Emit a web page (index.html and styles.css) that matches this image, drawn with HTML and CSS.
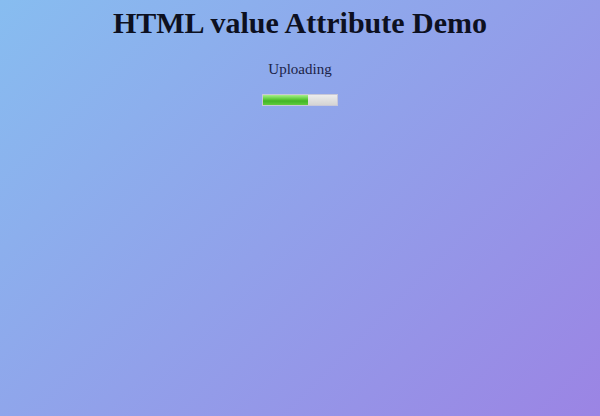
FILE: index.html
```html
<!DOCTYPE html>
<html>
<head>
<meta charset="utf-8">
<link rel="stylesheet" href="styles.css">
</head>
<body>
<h1 class="title">HTML value Attribute Demo</h1>
<p class="label">Uploading</p>
<div class="bar"><div class="fill" style="width:61%"></div></div>
</body>
</html>
```
FILE: styles.css
```css
html, body { margin: 0; height: 100%; }
body {
  font-family: "Liberation Serif", serif;
  background: linear-gradient(135deg, #87bdf0 0%, #9b84e4 100%);
  color: #1b1f3b;
  text-align: center;
  padding-top: 6px;
  box-sizing: border-box;
}
.title { font-size: 30px; margin: 0; line-height: 34px; color: #0d1020; }
.label { font-size: 15px; margin: 21px 0 0; line-height: 17px; color: #1b2348; }
.bar {
  width: 76px; height: 12px; margin: 16px auto 0;
  background: linear-gradient(#ececec, #d4d4d4);
  border: 1px solid #c8c8d8; box-sizing: border-box; overflow: hidden;
}
.fill { height: 100%; background: linear-gradient(#a8ee8a 0%, #5fcc3c 40%, #42b526 60%, #5fcc3c 100%); }
```
